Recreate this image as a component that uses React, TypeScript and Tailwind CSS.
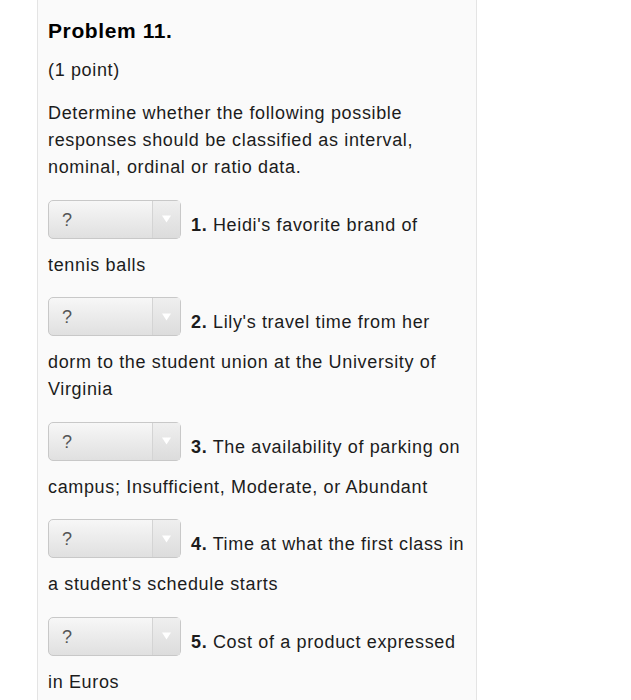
const items = [
  { n: '1.', first: "Heidi's favorite brand of", rest: ['tennis balls'] },
  { n: '2.', first: "Lily's travel time from her", rest: ['dorm to the student union at the University of', 'Virginia'] },
  { n: '3.', first: 'The availability of parking on', rest: ['campus; Insufficient, Moderate, or Abundant'] },
  { n: '4.', first: 'Time at what the first class in', rest: ["a student's schedule starts"] },
  { n: '5.', first: 'Cost of a product expressed', rest: ['in Euros'] },
];

function Dropdown() {
  return (
    <span className="inline-flex h-[39px] w-[133px] mb-[13px] mr-[10px] align-middle rounded-[5px] border border-[#c8c8c8] bg-linear-to-b from-[#f7f7f7] to-[#e0e0e0] tracking-normal">
      <span className="flex-1 pl-[13px] leading-[39px] text-[#555]">?</span>
      <span className="flex w-[28px] items-center justify-center border-l border-[#d4d4d4] bg-linear-to-b from-[#efefef] to-[#dcdcdc]">
        <svg width="9" height="8" viewBox="0 0 9 8">
          <path d="M0 0.5 L9 0.5 L4.5 7.5 Z" fill="#ffffff" />
        </svg>
      </span>
    </span>
  );
}

export default function App() {
  return (
    <div className="min-h-screen bg-white" style={{ fontFamily: '"Liberation Sans", Arial, sans-serif' }}>
      <div className="ml-[37px] w-[440px] min-h-[700px] border-x border-[#e4e4e4] bg-[#fafafa] px-[10px] pt-[19px] text-[18px] leading-[27px] tracking-[0.65px] text-[#1c1c1c]">
        <h1 className="text-[21px] font-bold leading-[24px] tracking-[0.6px] text-black">Problem 11.</h1>
        <p className="mt-[14px]">(1 point)</p>
        <p className="mt-[16px]">
          Determine whether the following possible
          <br />
          responses should be classified as interval,
          <br />
          nominal, ordinal or ratio data.
        </p>
        {items.map((it) => (
          <div key={it.n} className="mt-[18.5px] whitespace-nowrap">
            <Dropdown />
            <b className="font-bold">{it.n}</b> {it.first}
            {it.rest.map((line) => (
              <span key={line}>
                <br />
                {line}
              </span>
            ))}
          </div>
        ))}
      </div>
    </div>
  );
}
